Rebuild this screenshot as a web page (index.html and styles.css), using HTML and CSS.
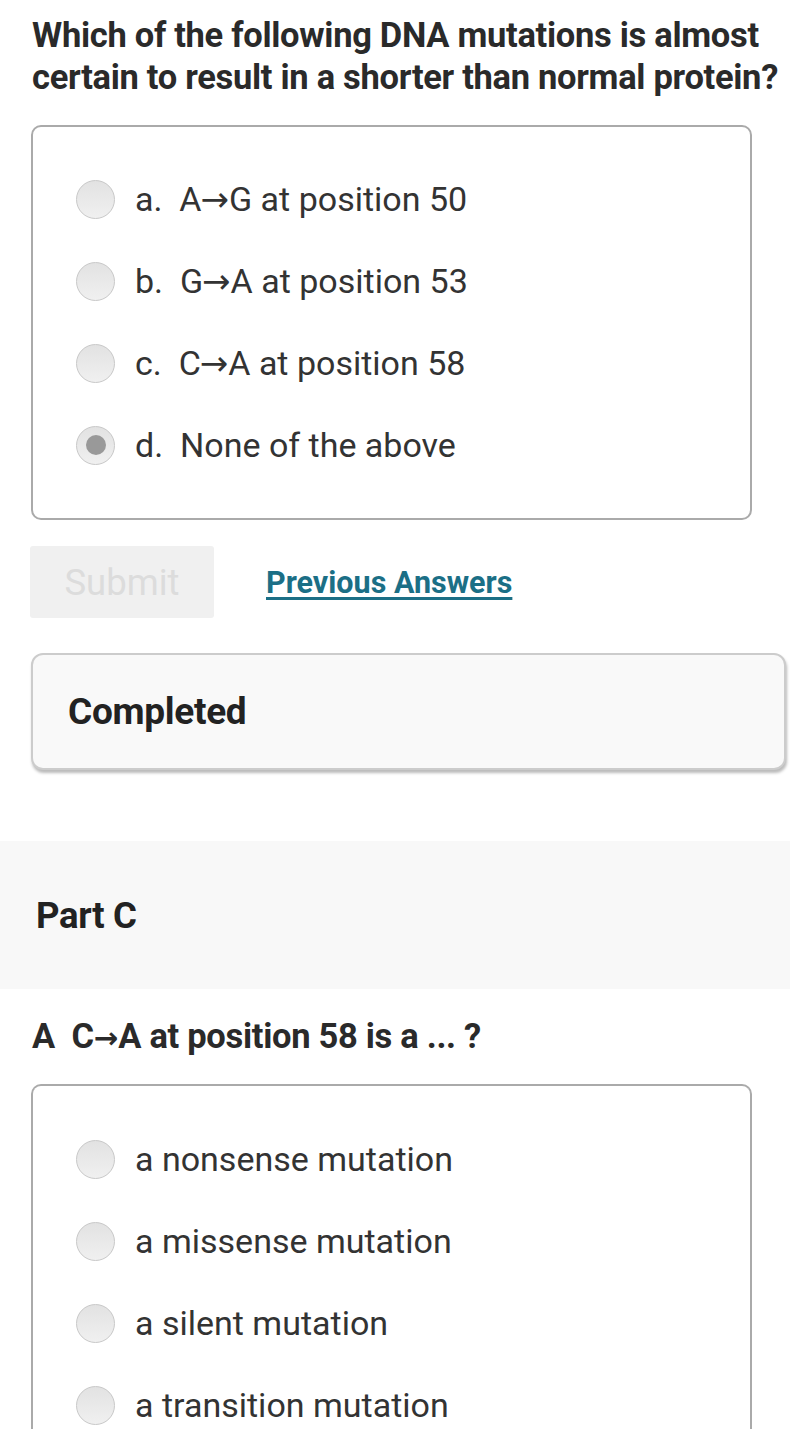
FILE: index.html
```html
<!DOCTYPE html>
<html lang="en">
<head>
    <meta charset="UTF-8">
    <meta name="viewport" content="width=device-width, initial-scale=1.0">
    <title>Part B</title>
    <link rel="stylesheet" href="styles.css">
</head>
<body>
    <div class="part">
        <h2 class="question">Which of the following DNA mutations is almost certain to result in a shorter than normal protein?</h2>
        <div class="choices">
            <label class="choice"><span class="radio"></span><span class="choice-label">a.&nbsp; A<span class="arrow">→</span>G at position 50</span></label>
            <label class="choice"><span class="radio"></span><span class="choice-label">b.&nbsp; G<span class="arrow">→</span>A at position 53</span></label>
            <label class="choice"><span class="radio"></span><span class="choice-label">c.&nbsp; C<span class="arrow">→</span>A at position 58</span></label>
            <label class="choice"><span class="radio checked"></span><span class="choice-label">d.&nbsp; None of the above</span></label>
        </div>
        <div class="actions">
            <button class="submit-button" type="button" disabled>Submit</button>
            <a href="#" class="prev-link">Previous Answers</a>
        </div>
        <div class="status-box">
            <p>Completed</p>
        </div>
    </div>

    <!-- Part C -->
    <div class="part-header">
        <h3>Part C</h3>
    </div>
    <div class="part">
        <h2 class="question short">A&nbsp; C<span class="arrow">→</span>A at position 58 is a ... ?</h2>
        <div class="choices open">
            <label class="choice"><span class="radio"></span><span class="choice-label">a nonsense mutation</span></label>
            <label class="choice"><span class="radio"></span><span class="choice-label">a missense mutation</span></label>
            <label class="choice"><span class="radio"></span><span class="choice-label">a silent mutation</span></label>
            <label class="choice"><span class="radio"></span><span class="choice-label">a transition mutation</span></label>
        </div>
    </div>
</body>
</html>
```

FILE: styles.css
```css
body {
    font-family: Roboto, "Liberation Sans", sans-serif;
    background-color: #fff;
    color: #333;
    margin: 0;
    padding: 0;
}
.part {
    padding: 0 38px 0 31px;
}
.question {
    font-size: 34.5px;
    font-weight: bold;
    line-height: 42px;
    color: #2a2a2a;
    margin: 0 -38px 0 0;
    padding: 14px 0 0 1px;
    letter-spacing: -0.3px;
}
.question.short {
    padding-top: 26px;
}
/* arrows in Roboto are tiny, the reference uses a full-width one */
.arrow {
    font-family: "DejaVu Sans", sans-serif;
    font-weight: normal;
    font-size: 1em;
    letter-spacing: -1px;
    margin: 0 1px 0 -1px;
}
.question .arrow {
    font-weight: bold;
    font-size: 0.85em;
    margin: 0 1px 0 0;
}
/* Answer box */
.choices {
    margin-top: 27px;
    border: 2px solid #aaa;
    border-radius: 10px;
    padding: 53px 0 54px 43px;
    display: flex;
    flex-direction: column;
    gap: 44px;
}
.choices.open {
    margin-top: 25px;
    padding-top: 54px;
    border-bottom: none;
    border-radius: 10px 10px 0 0;
}
.choice {
    display: flex;
    align-items: center;
    height: 38px;
}
.radio {
    width: 37px;
    height: 37px;
    border-radius: 50%;
    border: 1px solid #c8c8c8;
    background: linear-gradient(#e2e2e2, #f0f0f0);
    display: flex;
    align-items: center;
    justify-content: center;
    flex-shrink: 0;
}
.radio.checked::after {
    content: "";
    width: 20px;
    height: 20px;
    border-radius: 50%;
    background-color: #999;
}
.choice-label {
    margin-left: 20px;
    font-size: 34px;
    color: #333;
    white-space: nowrap;
}
/* Submit row */
.actions {
    display: flex;
    align-items: center;
    margin-top: 26px;
    margin-left: -1px;
}
.submit-button {
    width: 184px;
    height: 72px;
    background-color: #f0f0f0;
    color: #dcdcdc;
    border: none;
    border-radius: 3px;
    font-family: inherit;
    font-size: 36.5px;
    padding: 0;
}
.prev-link {
    margin-left: 52px;
    font-size: 30.5px;
    font-weight: bold;
    color: #1b6f86;
    text-decoration: underline;
    text-underline-offset: 4px;
}
.status-box {
    margin-top: 35px;
    margin-right: -34px;
    background-color: #f9f9f9;
    border: 2px solid #ccc;
    border-radius: 12px;
    box-shadow: 1px 3px 3px #bbb;
    height: 113px;
    display: flex;
    align-items: center;
    padding-left: 35px;
}
.status-box p {
    margin: 0;
    font-size: 37px;
    font-weight: bold;
    color: #222;
    letter-spacing: -0.3px;
}
.part-header {
    margin-top: 71px;
    background-color: #f8f8f8;
    height: 148px;
    display: flex;
    align-items: center;
    padding-left: 36px;
}
.part-header h3 {
    margin: 0;
    font-size: 36.5px;
    font-weight: bold;
    color: #222;
    letter-spacing: -0.3px;
}
```
